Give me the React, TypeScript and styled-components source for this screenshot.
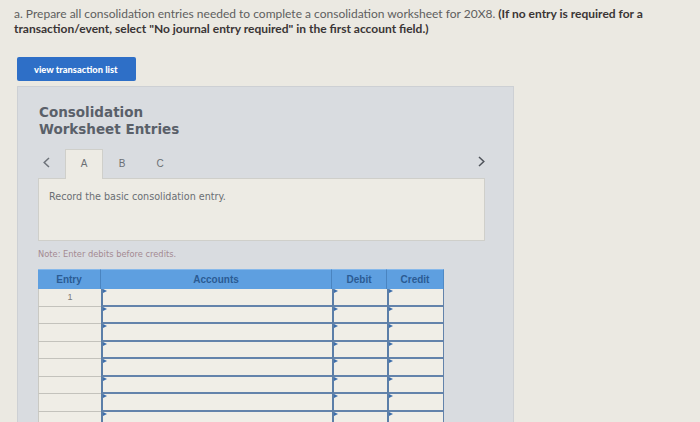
import React from "react";
import styled, { createGlobalStyle } from "styled-components";

const GlobalStyle = createGlobalStyle`
  html, body {
    margin: 0;
    padding: 0;
    background: #ebe9e2;
    overflow: hidden;
  }
`;

const Page = styled.div`
  padding: 6px 0 0 14px;
  height: 422px;
  box-sizing: border-box;
  overflow: hidden;
`;

const Instructions = styled.p`
  margin: 0;
  font-family: Lato, "Open Sans", sans-serif;
  font-size: 12px;
  line-height: 15px;
  color: #5e5e5e;
  width: 660px;
`;

const Strong = styled.strong`
  font-weight: 700;
  color: #3a3535;
`;

const ListButton = styled.button`
  display: block;
  margin: 21px 0 0 3px;
  width: 119px;
  height: 24px;
  border: none;
  border-radius: 2px;
  background: #2e6fc7;
  color: #fff;
  font-family: Lato, sans-serif;
  font-weight: 900;
  font-size: 9.3px;
  text-align: left;
  padding: 0 0 0 17px;
`;

const Panel = styled.section`
  margin: 5px 0 0 3px;
  width: 497px;
  height: 400px;
  box-sizing: border-box;
  background: #d9dce0;
  border: 1px solid #cdd0d4;
  padding: 17px 0 0 20px;
`;

const Title = styled.h2`
  margin: 0 0 0 1px;
  font-family: "DejaVu Sans", Verdana, sans-serif;
  font-weight: 700;
  font-size: 13.5px;
  line-height: 17px;
  color: #5a6069;
`;

const TabsRow = styled.div`
  margin-top: 11px;
  width: 447px;
  height: 29px;
  display: flex;
  align-items: stretch;
`;

const Arrow = styled.span<{ $right?: boolean }>`
  display: flex;
  align-items: center;
  width: ${(p) => (p.$right ? "auto" : "27px")};
  margin-left: ${(p) => (p.$right ? "auto" : "0")};
  padding: ${(p) => (p.$right ? "0 0 5px 0" : "0 0 3px 5px")};
  box-sizing: border-box;
`;

const Tab = styled.div<{ $active?: boolean }>`
  width: 38px;
  box-sizing: border-box;
  display: flex;
  justify-content: center;
  align-items: center;
  padding-bottom: 3px;
  font-family: "Liberation Sans", Arial, sans-serif;
  font-size: 10px;
  color: #6b6f74;
  position: relative;
  z-index: 1;
  background: ${(p) => (p.$active ? "#edebe4" : "transparent")};
  border: 1px solid ${(p) => (p.$active ? "#cfcfca" : "transparent")};
  border-bottom: none;
  margin-bottom: -1px;
`;

const ContentBox = styled.div`
  width: 447px;
  height: 63px;
  box-sizing: border-box;
  background: #edebe4;
  border: 1px solid #cfcfca;
  padding: 11px 0 0 10px;
  font-family: "DejaVu Sans", Verdana, sans-serif;
  font-size: 9.6px;
  line-height: 13px;
  color: #6a6e73;
`;

const Note = styled.p`
  margin: 8px 0 0;
  font-family: "DejaVu Sans", Verdana, sans-serif;
  font-size: 8.3px;
  line-height: 11px;
  color: #a48a92;
`;

const Table = styled.div`
  margin-top: 9px;
  width: 406px;
  display: grid;
  grid-template-columns: 63px 231px 55px 57px;
  grid-auto-rows: 17.5px;
  grid-template-rows: 20px;
`;

const HeadCell = styled.div<{ $last?: boolean }>`
  background: #5e9fe0;
  border-top: 1px solid #86b8ea;
  border-right: 1px solid ${(p) => (p.$last ? "#4f8ac6" : "#4a84c0")};
  box-sizing: border-box;
  display: flex;
  align-items: center;
  justify-content: center;
  font-family: "Liberation Sans", Arial, sans-serif;
  font-weight: 700;
  font-size: 10px;
  color: #2b5b93;
`;

const EntryCell = styled.div`
  background: #efede6;
  border-left: 1px solid #cac9c3;
  border-bottom: 1px solid #c3c2bc;
  box-sizing: border-box;
  display: flex;
  justify-content: center;
  padding-top: 3px;
  font-family: "Liberation Sans", Arial, sans-serif;
  font-size: 9px;
  color: #7a7a7a;
`;

const InputCell = styled.div<{ $last?: boolean }>`
  position: relative;
  background: #f0eee7;
  border-left: 2px solid #5b7ea8;
  border-bottom: 2px solid #6383ab;
  border-right: ${(p) => (p.$last ? "1px solid #6383ab" : "none")};
  box-sizing: border-box;

  &::before {
    content: "";
    position: absolute;
    left: 0;
    top: 0;
    border-top: 2.5px solid transparent;
    border-bottom: 2.5px solid transparent;
    border-left: 4px solid #3d6eab;
  }
`;

const Chevron = ({ dir }: { dir: "left" | "right" }) => (
  <svg width="7" height="11" viewBox="0 0 7 11">
    <polyline
      points={dir === "left" ? "6,1 1.2,5.5 6,10" : "1,1 5.8,5.5 1,10"}
      fill="none"
      stroke={dir === "left" ? "#6d7279" : "#4f535a"}
      strokeWidth="1.5"
    />
  </svg>
);

const rows = Array.from({ length: 8 }, (_, i) => i);

export default function App() {
  return (
    <>
      <GlobalStyle />
      <Page>
        <Instructions>
          a. Prepare all consolidation entries needed to complete a consolidation worksheet for 20X8.{" "}
          <Strong>(If no entry is required for a</Strong>
          <br />
          <Strong>transaction/event, select "No journal entry required" in the first account field.)</Strong>
        </Instructions>
        <ListButton>view transaction list</ListButton>
        <Panel>
          <Title>
            Consolidation
            <br />
            Worksheet Entries
          </Title>
          <TabsRow>
            <Arrow>
              <Chevron dir="left" />
            </Arrow>
            <Tab $active>A</Tab>
            <Tab>B</Tab>
            <Tab>C</Tab>
            <Arrow $right>
              <Chevron dir="right" />
            </Arrow>
          </TabsRow>
          <ContentBox>Record the basic consolidation entry.</ContentBox>
          <Note>Note: Enter debits before credits.</Note>
          <Table>
            <HeadCell>Entry</HeadCell>
            <HeadCell>Accounts</HeadCell>
            <HeadCell>Debit</HeadCell>
            <HeadCell $last>Credit</HeadCell>
            {rows.map((i) => (
              <React.Fragment key={i}>
                <EntryCell>{i === 0 ? "1" : ""}</EntryCell>
                <InputCell />
                <InputCell />
                <InputCell $last />
              </React.Fragment>
            ))}
          </Table>
        </Panel>
      </Page>
    </>
  );
}
